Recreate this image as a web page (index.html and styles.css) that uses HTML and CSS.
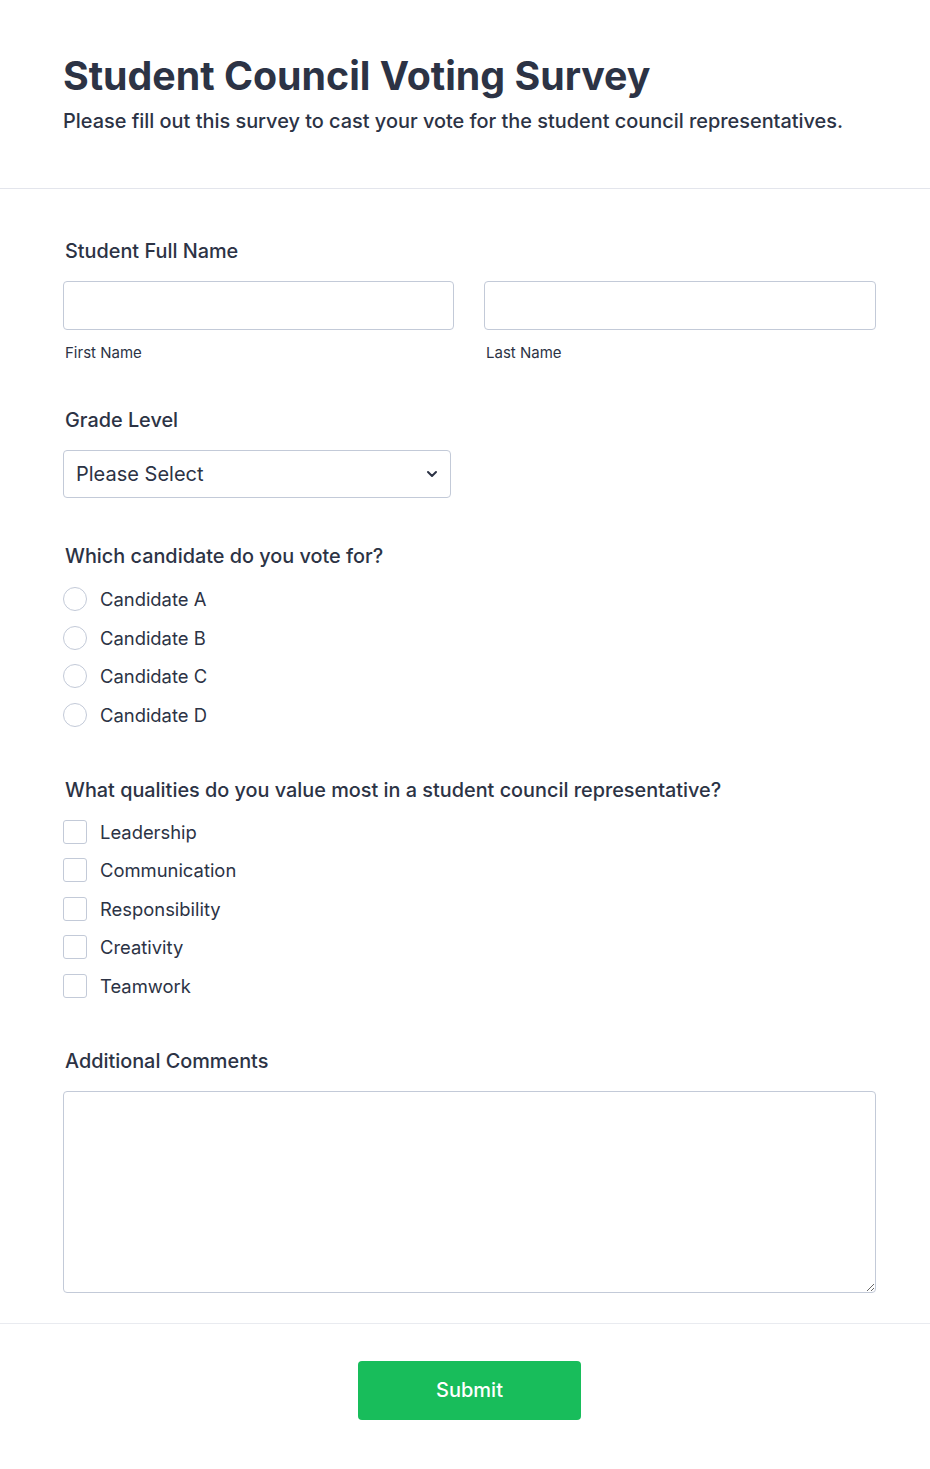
FILE: index.html
```html
<!DOCTYPE html>
<html lang="en">
<head>
<meta charset="utf-8">
<title>Student Council Voting Survey</title>
<link rel="stylesheet" href="styles.css">
</head>
<body>
<form class="survey">
  <header class="survey-header">
    <h1 class="survey-title">Student Council Voting Survey</h1>
    <p class="survey-subtitle">Please fill out this survey to cast your vote for the student council representatives.</p>
  </header>

  <div class="survey-body">
    <div class="field field-name">
      <label class="field-label">Student Full Name</label>
      <div class="name-row">
        <div class="name-col">
          <input class="text-input" type="text">
          <span class="sublabel">First Name</span>
        </div>
        <div class="name-col">
          <input class="text-input" type="text">
          <span class="sublabel">Last Name</span>
        </div>
      </div>
    </div>

    <div class="field field-grade">
      <label class="field-label">Grade Level</label>
      <div class="select-wrap">
        <select class="select-input">
          <option>Please Select</option>
        </select>
        <svg class="chevron" width="14" height="14" viewBox="0 0 14 14" aria-hidden="true"><path d="M3 5l4 4 4-4" fill="none" stroke="#2c3345" stroke-width="2" stroke-linecap="round" stroke-linejoin="round"/></svg>
      </div>
    </div>

    <div class="field field-radio">
      <label class="field-label">Which candidate do you vote for?</label>
      <div class="option-list">
        <label class="option"><input class="radio" type="radio" name="cand"><span>Candidate A</span></label>
        <label class="option"><input class="radio" type="radio" name="cand"><span>Candidate B</span></label>
        <label class="option"><input class="radio" type="radio" name="cand"><span>Candidate C</span></label>
        <label class="option"><input class="radio" type="radio" name="cand"><span>Candidate D</span></label>
      </div>
    </div>

    <div class="field field-check">
      <label class="field-label">What qualities do you value most in a student council representative?</label>
      <div class="option-list">
        <label class="option"><input class="checkbox" type="checkbox"><span>Leadership</span></label>
        <label class="option"><input class="checkbox" type="checkbox"><span>Communication</span></label>
        <label class="option"><input class="checkbox" type="checkbox"><span>Responsibility</span></label>
        <label class="option"><input class="checkbox" type="checkbox"><span>Creativity</span></label>
        <label class="option"><input class="checkbox" type="checkbox"><span>Teamwork</span></label>
      </div>
    </div>

    <div class="field field-comments">
      <label class="field-label">Additional Comments</label>
      <textarea class="textarea-input"></textarea>
    </div>
  </div>

  <div class="survey-footer">
    <button class="submit-btn" type="button">Submit</button>
  </div>
</form>
</body>
</html>
```

FILE: styles.css
```css
* { box-sizing: border-box; }

html, body {
  margin: 0;
  padding: 0;
  background: #ffffff;
}

body {
  font-family: Inter, "Noto Sans", "Liberation Sans", sans-serif;
  color: #2c3345;
}

.survey {
  width: 930px;
}

.survey-header {
  padding: 52px 54px 0 63px;
  height: 189px;
  border-bottom: 1px solid #e3e5ec;
}

.survey-title {
  margin: 0;
  font-size: 39.3px;
  line-height: 48px;
  font-weight: 700;
  letter-spacing: 0;
  color: #2c3345;
}

.survey-subtitle {
  margin: 9px 0 0;
  font-size: 19.9px;
  line-height: 24px;
  font-weight: 500;
  color: #2c3345;
}

.survey-body {
  padding: 50px 54px 30px 63px;
  border-bottom: 1px solid #e9ebf0;
}

.field {
  display: flex;
  flex-direction: column;
}

.field-label {
  display: block;
  padding-left: 2px;
  font-size: 19.85px;
  line-height: 24px;
  font-weight: 500;
  color: #2c3345;
  margin-bottom: 18px;
}

.name-row {
  display: grid;
  grid-template-columns: 391px 392px;
  column-gap: 30px;
}

.name-col {
  display: flex;
  flex-direction: column;
}

.text-input {
  height: 49px;
  width: 100%;
  border: 1px solid #c3cad8;
  border-radius: 4px;
  background: #fff;
  font: inherit;
  font-size: 18px;
  padding: 0 12px;
}

.sublabel {
  margin-top: 14px;
  padding-left: 2px;
  font-size: 15px;
  line-height: 18px;
  color: #2c3345;
}

.field-name { margin-bottom: 46px; }
.field-grade { margin-bottom: 46px; }
.field-radio { margin-bottom: 51px; }
.field-check { margin-bottom: 51px; }

.select-wrap {
  position: relative;
  width: 388px;
}

.select-input {
  appearance: none;
  -webkit-appearance: none;
  width: 388px;
  height: 48px;
  border: 1px solid #c3cad8;
  border-radius: 4px;
  background: #fff;
  font-family: inherit;
  font-size: 20px;
  color: #2c3345;
  padding: 0 40px 0 12px;
}

.chevron {
  position: absolute;
  right: 12px;
  top: 17px;
  pointer-events: none;
}

.option-list {
  display: flex;
  flex-direction: column;
  gap: 14.5px;
}

.field-radio .option-list { margin-top: 1px; }
.field-check .option-list { margin-top: 0; }

.option {
  display: flex;
  align-items: center;
  height: 24px;
  font-size: 18.4px;
  color: #2c3345;
}

.option span {
  margin-left: 13px;
  line-height: 24px;
}

.radio,
.checkbox {
  appearance: none;
  -webkit-appearance: none;
  margin: 0;
  width: 24px;
  height: 24px;
  border: 1px solid #c3cad8;
  background: #fff;
  flex: none;
}

.radio { border-radius: 50%; }
.checkbox { border-radius: 3px; }

.textarea-input {
  display: block;
  width: 813px;
  height: 202px;
  border: 1px solid #c3cad8;
  border-radius: 4px;
  background: #fff;
  font: inherit;
  font-size: 16px;
  padding: 10px 12px;
}

.survey-footer {
  display: flex;
  justify-content: center;
  padding: 37px 54px 49px 63px;
}

.submit-btn {
  width: 223px;
  height: 59px;
  border: 0;
  border-radius: 4px;
  background: #18bd5b;
  color: #fff;
  font-family: inherit;
  font-size: 20px;
  font-weight: 500;
  cursor: pointer;
}
```
